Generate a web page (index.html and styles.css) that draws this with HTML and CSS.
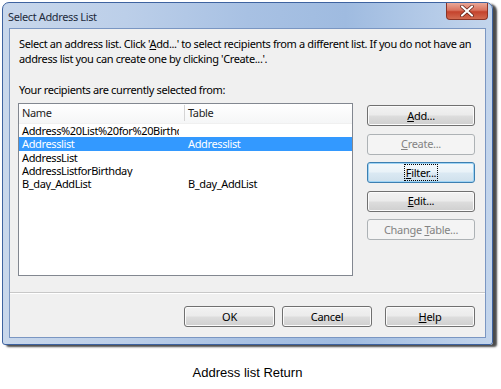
FILE: index.html
```html
<!DOCTYPE html>
<html>
<head>
<meta charset="utf-8">
<title>Select Address List</title>
<link rel="stylesheet" href="styles.css">
</head>
<body>
<div class="page">
  <div class="window">
    <div class="titlebar">
      <span class="title">Select Address List</span>
      <span class="close"><svg width="16" height="12" viewBox="0 0 16 12"><path d="M3 1.5 L13 10.5 M13 1.5 L3 10.5" stroke="#5a1a10" stroke-width="3.6" stroke-linecap="round"/><path d="M3 1.5 L13 10.5 M13 1.5 L3 10.5" stroke="#ffffff" stroke-width="2.2" stroke-linecap="round"/></svg></span>
    </div>
    <div class="content">
      <p class="intro">Select an address list. Click '<u>A</u>dd...' to select recipients from a different list. If you do not have an<br>address list you can create one by clicking 'Create...'.</p>
      <p class="from">Your recipients are currently selected from:</p>
      <div class="main">
        <div class="listbox">
          <div class="lhead"><span class="cname">Name</span><span class="ctable">Table</span></div>
          <div class="row"><span class="cname">Address%20List%20for%20Birthday</span><span class="ctable"></span></div>
          <div class="row selected"><span class="cname">Addresslist</span><span class="ctable">Addresslist</span></div>
          <div class="row"><span class="cname">AddressList</span><span class="ctable"></span></div>
          <div class="row"><span class="cname">AddressListforBirthday</span><span class="ctable"></span></div>
          <div class="row"><span class="cname">B_day_AddList</span><span class="ctable">B_day_AddList</span></div>
        </div>
        <div class="side">
          <button class="btn"><u>A</u>dd...</button>
          <button class="btn disabled"><u>C</u>reate...</button>
          <button class="btn focus"><span class="ring"><u>F</u>ilter...</span></button>
          <button class="btn"><u>E</u>dit...</button>
          <button class="btn disabled">Change <u>T</u>able...</button>
        </div>
      </div>
      <div class="sep"></div>
      <div class="footer">
        <button class="btn ok">OK</button>
        <button class="btn cancel">Cancel</button>
        <button class="btn help"><u>H</u>elp</button>
      </div>
    </div>
  </div>
  <p class="caption">Address list Return</p>
</div>
</body>
</html>
```

FILE: styles.css
```css
html, body {
  margin: 0;
  padding: 0;
  background: #ffffff;
}

body {
  font-family: "Noto Sans", "DejaVu Sans", sans-serif;
  font-size: 11px;
  letter-spacing: -0.37px;
  color: #000;
}

.page {
  padding: 2px 0 0 2px;
}

.window {
  width: 491px;
  height: 343px;
  box-sizing: border-box;
  border: 1px solid #3e63a0;
  border-radius: 7px 7px 3px 3px;
  background: linear-gradient(to right, #c8d7eb 0%, #bccfe9 25%, #a8c1e3 50%, #9fbbe0 70%, #b5cbe8 88%, #c3d5ec 100%);
  padding: 0 6px 6px 6px;
  display: flex;
  flex-direction: column;
  box-shadow: 4px 2px 2px rgba(30, 30, 30, 0.8);
}

.titlebar {
  height: 25px;
  flex: none;
  display: flex;
  justify-content: space-between;
  align-items: flex-start;
}

.title {
  margin-top: 6px;
  margin-left: -1px;
  line-height: 16px;
  color: #1e2b3c;
}

.close {
  width: 42px;
  height: 17px;
  margin-right: -2px;
  box-sizing: border-box;
  border: 1px solid #8a3426;
  border-top: none;
  border-radius: 0 0 4px 4px;
  background: linear-gradient(#e9a898 0%, #d9735f 45%, #c4432d 55%, #d26a50 100%);
  display: flex;
  align-items: center;
  justify-content: center;
}

.content {
  flex: 1;
  background: #f0f0f0;
  border: 1px solid #7a96c2;
  display: flex;
  flex-direction: column;
}

.intro {
  margin: 7px 0 0 9px;
  line-height: 15px;
  white-space: nowrap;
}

.from {
  margin: 16px 0 0 9px;
  line-height: 15px;
}

u {
  text-decoration: underline;
  text-underline-offset: 1px;
}

.main {
  display: flex;
  margin-top: 6px;
}

.listbox {
  margin-left: 8px;
  width: 335px;
  height: 173px;
  box-sizing: border-box;
  border: 1px solid #828790;
  background: #ffffff;
}

.lhead {
  height: 20px;
  display: flex;
  background: linear-gradient(#ffffff, #f5f6f7);
  border-bottom: 1px solid #f0f0f0;
  box-sizing: border-box;
}

.lhead .cname {
  height: 16px;
  margin-top: 1px;
  line-height: 16px;
  border-right: 1px solid #d5d5d5;
  box-sizing: border-box;
}

.lhead .ctable {
  margin-top: 1px;
  line-height: 16px;
}

.lhead span {
  color: #1e1e1e;
}

.cname {
  width: 166px;
  padding-left: 3px;
  box-sizing: border-box;
  overflow: hidden;
  white-space: nowrap;
}

.ctable {
  padding-left: 3px;
  white-space: nowrap;
}

.row {
  display: flex;
  height: 13.3px;
  line-height: 13.3px;
}

.row .cname {
  width: 160px;
}

.row .ctable {
  padding-left: 9px;
}

.row.selected {
  background: #3399ff;
  color: #ffffff;
}

.side {
  display: flex;
  flex-direction: column;
  gap: 7.5px;
  margin: 2px 0 0 14px;
}

.btn {
  box-sizing: border-box;
  width: 108px;
  height: 21px;
  padding: 0;
  border: 1px solid #707070;
  border-radius: 3px;
  background: linear-gradient(#f2f2f2 0%, #ebebeb 48%, #dddddd 52%, #cfcfcf 100%);
  box-shadow: inset 0 0 0 1px #fbfbfb;
  font-family: "Noto Sans", "DejaVu Sans", sans-serif;
  font-size: 11px;
  letter-spacing: -0.3px;
  line-height: 18px;
  color: #000;
  text-align: center;
}

.btn.disabled {
  border-color: #adb2b5;
  background: #f4f4f4;
  box-shadow: none;
  color: #838383;
}

.btn.focus {
  border-color: #3c7fb1;
  background: linear-gradient(#f3f8fb 0%, #e9f2f8 48%, #dbe9f3 52%, #cfe0ec 100%);
  box-shadow: inset 0 0 0 1px #9fd4f5;
}

.ring {
  outline: 1px dotted #000;
  outline-offset: 0;
  padding: 0 1px;
}

.sep {
  margin-top: 16px;
  height: 0;
  border-top: 1px solid #c8c8c8;
  border-bottom: 1px solid #ffffff;
}

.footer {
  display: flex;
  justify-content: flex-end;
  padding-right: 10px;
  margin-top: 12px;
}

.ok {
  width: 91px;
}

.cancel {
  width: 90px;
  margin-left: 7px;
}

.help {
  width: 90px;
  margin-left: 13px;
}

.caption {
  width: 491px;
  margin: 20px 0 0 0;
  text-align: center;
  font-family: "Liberation Sans", Arial, sans-serif;
  font-size: 13px;
  letter-spacing: 0;
  line-height: 15px;
  color: #000;
}
```
